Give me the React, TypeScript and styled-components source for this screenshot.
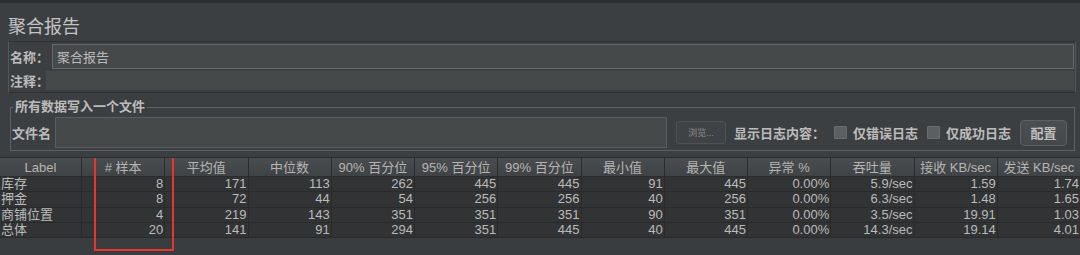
import styled, { createGlobalStyle } from "styled-components";

import type { FC } from "react";

const GlobalStyle = createGlobalStyle`
  html, body {
    margin: 0;
    padding: 0;
    background: #3c3f41;
  }
  #root {
    width: 1080px;
    height: 255px;
    overflow: hidden;
  }
`;

const FONT = `"Liberation Sans", "Noto Sans CJK SC", sans-serif`;

const columns = [
  "Label",
  "# 样本",
  "平均值",
  "中位数",
  "90% 百分位",
  "95% 百分位",
  "99% 百分位",
  "最小值",
  "最大值",
  "异常 %",
  "吞吐量",
  "接收 KB/sec",
  "发送 KB/sec",
];

const rows = [
  ["库存", "8", "171", "113", "262", "445", "445", "91", "445", "0.00%", "5.9/sec", "1.59", "1.74"],
  ["押金", "8", "72", "44", "54", "256", "256", "40", "256", "0.00%", "6.3/sec", "1.48", "1.65"],
  ["商铺位置", "4", "219", "143", "351", "351", "351", "90", "351", "0.00%", "3.5/sec", "19.91", "1.03"],
  ["总体", "20", "141", "91", "294", "351", "445", "40", "445", "0.00%", "14.3/sec", "19.14", "4.01"],
];

const App: FC = () => {
  return (
    <Page>
      <GlobalStyle />
      <TopStrip />
      <Title>聚合报告</Title>
      <NamePanel>
        <FieldRow>
          <FieldLabel>名称：</FieldLabel>
          <TextField defaultValue="聚合报告" />
        </FieldRow>
        <FieldRow>
          <FieldLabel>注释：</FieldLabel>
          <CommentField />
        </FieldRow>
      </NamePanel>
      <GroupBox>
        <Legend>所有数据写入一个文件</Legend>
        <FileRow>
          <FieldLabel>文件名</FieldLabel>
          <FileField />
          <BrowseButton>浏览...</BrowseButton>
          <BoldText>显示日志内容：</BoldText>
          <CheckItem>
            <CheckBox />
            <BoldText>仅错误日志</BoldText>
          </CheckItem>
          <CheckItem>
            <CheckBox />
            <BoldText>仅成功日志</BoldText>
          </CheckItem>
          <ConfigButton>配置</ConfigButton>
        </FileRow>
      </GroupBox>
      <TableArea>
        <Grid>
          {columns.map((c) => (
            <HeadCell key={c}>{c}</HeadCell>
          ))}
          {rows.map((r) =>
            r.map((v, i) => (
              <Cell key={r[0] + i} $left={i === 0}>
                {v}
              </Cell>
            ))
          )}
        </Grid>
        <Highlight />
      </TableArea>
    </Page>
  );
};

export default App;

const Page = styled.div`
  position: relative;
  width: 1080px;
  height: 255px;
  background: #3c3f41;
  color: #bbbbbb;
  font-family: ${FONT};
  font-size: 13px;
  display: flex;
  flex-direction: column;
`;

const TopStrip = styled.div`
  height: 3px;
  flex-shrink: 0;
  background: #2c2f31;
`;

const Title = styled.div`
  font-size: 18px;
  line-height: 22px;
  color: #c4c4c4;
  padding: 13px 0 0 8px;
  height: 25px;
  flex-shrink: 0;
`;

const NamePanel = styled.div`
  margin: 0 4px 0 8px;
  border: 1px solid #55585a;
  border-top-color: #2e3133;
  border-bottom-color: #2e3133;
  padding: 2px 1px 0 1px;
  display: flex;
  flex-direction: column;
  gap: 2px;
  height: 48px;
  flex-shrink: 0;
`;

const FieldRow = styled.div`
  display: flex;
  align-items: center;
`;

const FieldLabel = styled.span`
  font-weight: bold;
  color: #bcbcbc;
  white-space: nowrap;
  padding-right: 3px;
`;

const TextField = styled.input`
  flex: 1;
  height: 25px;
  box-sizing: border-box;
  background: #45494a;
  border: 1px solid #666869;
  color: #bbbbbb;
  font-family: ${FONT};
  font-size: 13px;
  padding: 0 4px;
  outline: none;
`;

const CommentField = styled.div`
  flex: 1;
  height: 19px;
  background: #45494a;
  margin-left: -6px;
`;

const GroupBox = styled.fieldset`
  margin: 7px 5px 0 10px;
  padding: 0 0 2px 1px;
  border: 1px solid #5e6163;
  flex-shrink: 0;
`;

const Legend = styled.legend`
  font-weight: bold;
  color: #bcbcbc;
  padding: 0 2px;
  margin-left: 1px;
  line-height: 14px;
`;

const FileRow = styled.div`
  display: flex;
  align-items: center;
  margin-top: 3px;
`;

const FileField = styled.div`
  width: 612px;
  height: 31px;
  box-sizing: border-box;
  background: #45494a;
  border: 1px solid #5b5e60;
  margin-left: 1px;
`;

const BrowseButton = styled.div`
  width: 50px;
  height: 23px;
  box-sizing: border-box;
  margin: 0 8px 0 9px;
  border: 1px solid #4f5254;
  border-radius: 3px;
  background: #404345;
  color: #8a8d8e;
  font-size: 9px;
  display: flex;
  align-items: center;
  justify-content: center;
`;

const BoldText = styled.span`
  font-weight: bold;
  color: #bcbcbc;
  white-space: nowrap;
`;

const CheckItem = styled.div`
  display: flex;
  align-items: center;
  gap: 6px;
  margin-left: 9px;
`;

const CheckBox = styled.div`
  width: 13px;
  height: 13px;
  box-sizing: border-box;
  background: #5c5f61;
  border: 1px solid #6a6d6f;
  border-radius: 1px;
`;

const ConfigButton = styled.div`
  width: 47px;
  height: 26px;
  box-sizing: border-box;
  margin-left: 9px;
  border: 1px solid #5d6062;
  border-radius: 4px;
  background: linear-gradient(#4c4f51, #45484a);
  font-weight: bold;
  color: #c0c0c0;
  display: flex;
  align-items: center;
  justify-content: center;
`;

const TableArea = styled.div`
  position: relative;
  margin-top: 6px;
  border-top: 1px solid #2a2c2e;
  flex: 1;
  background: #3a3d3f;
  overflow: hidden;
`;

const Grid = styled.div`
  display: grid;
  grid-template-columns: 82px repeat(12, 83.25px);
  grid-auto-rows: 15.3px;
  grid-template-rows: 19px;
  width: 1081px;
  background: #313335;
`;

const HeadCell = styled.div`
  background: linear-gradient(#4a4d50, #404345);
  border-right: 1px solid #2a2c2e;
  border-bottom: 1px solid #2a2c2e;
  color: #b4b4b4;
  text-align: center;
  line-height: 19px;
  white-space: nowrap;
  overflow: hidden;
`;

const Cell = styled.div<{ $left?: boolean }>`
  border-right: 1px solid #282a2c;
  border-bottom: 1px solid #282a2c;
  text-align: ${(p) => (p.$left ? "left" : "right")};
  padding: 0 1px;
  line-height: 14px;
  white-space: nowrap;
  overflow: hidden;
  color: #bbbbbb;
`;

const Highlight = styled.div`
  position: absolute;
  left: 94px;
  top: -14px;
  width: 80px;
  height: 107px;
  box-sizing: border-box;
  border: 2px solid #e8362f;
`;
